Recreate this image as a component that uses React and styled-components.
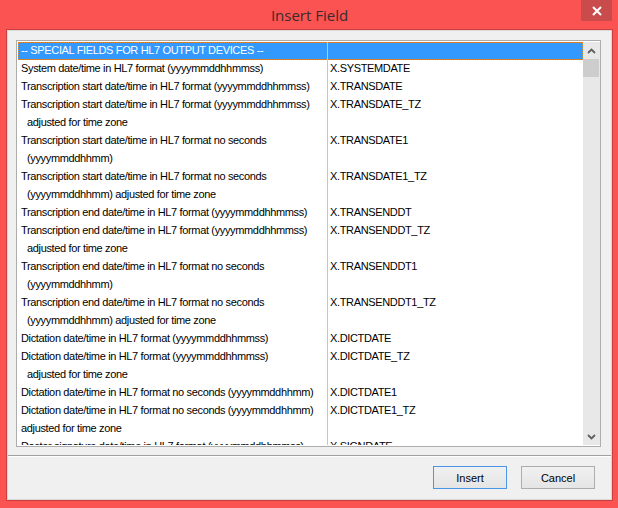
import React from 'react';
import styled, { createGlobalStyle } from 'styled-components';

const GlobalStyle = createGlobalStyle`
  html, body { margin: 0; padding: 0; background: #fb5252; }
  body { font-family: "Liberation Sans", Arial, sans-serif; }
`

const Window = styled.div`
  width: 618px;
  height: 508px;
  box-sizing: border-box;
  background: #fb5252;
  padding: 0 6px 8px 7px;
  display: flex;
  flex-direction: column;
`

const TitleBar = styled.div`
  height: 30px;
  display: grid;
  grid-template-columns: 1fr auto 1fr;
  align-items: start;
  margin-left: -7px;
  padding-left: 7px;
`

const Title = styled.div`
  font-family: "Open Sans", "Noto Sans", sans-serif;
  font-size: 15px;
  line-height: 30px;
  color: #3b2b2b;
`

const CloseButton = styled.div`
  justify-self: end;
  width: 31px;
  height: 21px;
  background: #c94b4b;
  display: flex;
  align-items: center;
  justify-content: center;
`

const Client = styled.div`
  flex: 1;
  background: #f0f0f0;
  border: 1px solid #d8d8d8;
  box-shadow: 0 0 0 1px rgba(120, 30, 30, 0.35);
  display: flex;
  flex-direction: column;
`

const ListBox = styled.div`
  margin: 9px 10px 0 8px;
  height: 407px;
  box-sizing: border-box;
  border: 1px solid #adadad;
  background: #fff;
  padding: 1px 0 1px 1px;
  display: flex;
`

const Rows = styled.div`
  flex: 1;
  overflow: hidden;
  display: flex;
  flex-direction: column;
`

const Row = styled.div`
  display: grid;
  grid-template-columns: 310px 1fr;
  flex: none;
  background: ${p => (p.selected ? '#3399ff' : 'transparent')};
  color: ${p => (p.selected ? '#fff' : '#000')};
  outline: ${p => (p.selected ? '1px dotted #e0892e' : 'none')};
  outline-offset: -1px;
`

const Filler = styled.div`
  flex: 1;
  display: grid;
  grid-template-columns: 310px 1fr;
`

const Cell = styled.div`
  font-size: 11px;
  letter-spacing: -0.35px;
  line-height: 17px;
  white-space: pre;
  padding-left: ${p => (p.first ? '3px' : '2px')};
  border-right: ${p => (p.first ? '1px solid #c6c6c6' : 'none')};
`

const Line = styled.div`
  padding-left: ${p => (p.indent ? '6px' : '0')};
  height: 18px;
`

const ScrollBar = styled.div`
  width: 17px;
  background: #e8e8e8;
  display: flex;
  flex-direction: column;
`

const Arrow = styled.div`
  height: 17px;
  display: flex;
  align-items: center;
  justify-content: center;
`

const Thumb = styled.div`
  height: 18px;
  margin: 0 1px 0 0;
  background: #cdcdcd;
`

const Track = styled.div`
  flex: 1;
`

const Separator = styled.div`
  margin-top: 8px;
  height: 1px;
  background: #a0a0a0;
  border-bottom: 1px solid #ffffff;
`

const Footer = styled.div`
  display: flex;
  justify-content: flex-end;
  gap: 14px;
  padding: 9px 16px 0 0;
`

const Button = styled.div`
  width: 74px;
  height: 23px;
  box-sizing: border-box;
  border: 1px solid ${p => (p.primary ? '#4a97e8' : '#adadad')};
  background: linear-gradient(#f0f0f0, #e5e5e5);
  font-size: 11px;
  color: #000;
  display: flex;
  align-items: center;
  justify-content: center;
`

const fields = [
  { label: ['-- SPECIAL FIELDS FOR HL7 OUTPUT DEVICES --'], code: '', selected: true },
  { label: ['System date/time in HL7 format (yyyymmddhhmmss)'], code: 'X.SYSTEMDATE' },
  { label: ['Transcription start date/time in HL7 format (yyyymmddhhmmss)'], code: 'X.TRANSDATE' },
  { label: ['Transcription start date/time in HL7 format (yyyymmddhhmmss)', '>adjusted for time zone'], code: 'X.TRANSDATE_TZ' },
  { label: ['Transcription start date/time in HL7 format no seconds', '>(yyyymmddhhmm)'], code: 'X.TRANSDATE1' },
  { label: ['Transcription start date/time in HL7 format no seconds', '>(yyyymmddhhmm) adjusted for time zone'], code: 'X.TRANSDATE1_TZ' },
  { label: ['Transcription end date/time in HL7 format (yyyymmddhhmmss)'], code: 'X.TRANSENDDT' },
  { label: ['Transcription end date/time in HL7 format (yyyymmddhhmmss)', '>adjusted for time zone'], code: 'X.TRANSENDDT_TZ' },
  { label: ['Transcription end date/time in HL7 format no seconds', '>(yyyymmddhhmm)'], code: 'X.TRANSENDDT1' },
  { label: ['Transcription end date/time in HL7 format no seconds', '>(yyyymmddhhmm) adjusted for time zone'], code: 'X.TRANSENDDT1_TZ' },
  { label: ['Dictation date/time in HL7 format (yyyymmddhhmmss)'], code: 'X.DICTDATE' },
  { label: ['Dictation date/time in HL7 format (yyyymmddhhmmss)', '>adjusted for time zone'], code: 'X.DICTDATE_TZ' },
  { label: ['Dictation date/time in HL7 format no seconds (yyyymmddhhmm)'], code: 'X.DICTDATE1' },
  { label: ['Dictation date/time in HL7 format no seconds (yyyymmddhhmm)', 'adjusted for time zone'], code: 'X.DICTDATE1_TZ' },
  { label: ['Doctor signature date/time in HL7 format (yyyymmddhhmmss)'], code: 'X.SIGNDATE' },
]

const Chevron = ({ up }) => (
  <svg width="9" height="6" viewBox="0 0 9 6">
    <path d={up ? 'M1 5 L4.5 1.5 L8 5' : 'M1 1 L4.5 4.5 L8 1'} fill="none" stroke="#606060" strokeWidth="1.8" />
  </svg>
)

const App = () => {
  return (
    <Window>
      <GlobalStyle />
      <TitleBar>
        <span />
        <Title>Insert Field</Title>
        <CloseButton>
          <svg width="10" height="10" viewBox="0 0 10 10">
            <path d="M1 1 L9 9 M9 1 L1 9" stroke="#fff" strokeWidth="2" />
          </svg>
        </CloseButton>
      </TitleBar>
      <Client>
        <ListBox>
          <Rows>
            {fields.map((f, i) => (
              <Row key={i} selected={f.selected}>
                <Cell first>
                  {f.label.map((l, j) => (
                    <Line key={j} indent={l.startsWith('>')}>{l.replace('>', '')}</Line>
                  ))}
                </Cell>
                <Cell>{f.code}</Cell>
              </Row>
            ))}
            <Filler>
              <Cell first />
              <Cell />
            </Filler>
          </Rows>
          <ScrollBar>
            <Arrow><Chevron up /></Arrow>
            <Thumb />
            <Track />
            <Arrow><Chevron /></Arrow>
          </ScrollBar>
        </ListBox>
        <Separator />
        <Footer>
          <Button primary>Insert</Button>
          <Button>Cancel</Button>
        </Footer>
      </Client>
    </Window>
  )
}

export default App;
